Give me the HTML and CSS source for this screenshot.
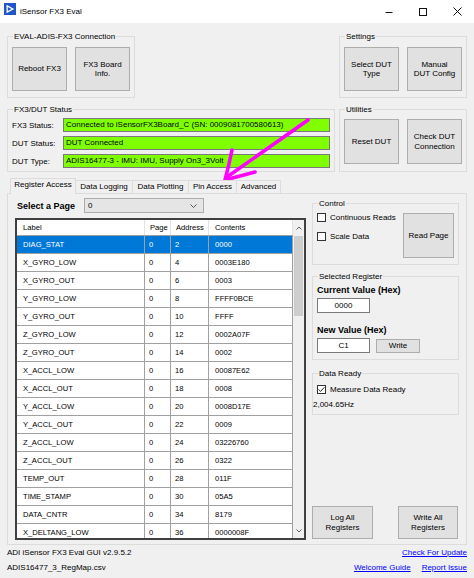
FILE: index.html
```html
<!DOCTYPE html>
<html lang="en">
<head>
<meta charset="utf-8">
<title>iSensor FX3 Eval</title>
<link rel="stylesheet" href="styles.css">
</head>
<body>
<div class="window">
  <div class="titlebar">
    <svg class="app-icon" viewBox="0 0 12 12" aria-hidden="true">
      <rect x="0" y="0" width="12" height="12" fill="#1f56c9"/>
      <polygon points="2.5,1.8 10.2,6 2.5,10.2" fill="#ffffff"/>
      <polygon points="3.8,3.9 7.6,6 3.8,8.1" fill="#1f56c9"/>
    </svg>
    <span class="title">iSensor FX3 Eval</span>
    <div class="win-controls">
      <span class="wc"><svg width="8" height="8" viewBox="0 0 8 8"><line x1="0.5" y1="4.5" x2="7.5" y2="4.5" stroke="#111" stroke-width="1"/></svg></span>
      <span class="wc"><svg width="8" height="8" viewBox="0 0 8 8"><rect x="0.5" y="0.5" width="7" height="7" fill="none" stroke="#111" stroke-width="1"/></svg></span>
      <span class="wc"><svg width="9" height="9" viewBox="0 0 9 9"><path d="M0.5 0.5 L8.5 8.5 M8.5 0.5 L0.5 8.5" stroke="#111" stroke-width="1"/></svg></span>
    </div>
  </div>

  <div class="content">
    <div class="row row-top">
      <div class="group g-small">
        <div class="group-title">EVAL-ADIS-FX3 Connection</div>
        <div class="btn-row">
          <button class="btn btn-big">Reboot FX3</button>
          <button class="btn btn-big">FX3 Board<br>Info.</button>
        </div>
      </div>
      <div class="group g-small">
        <div class="group-title">Settings</div>
        <div class="btn-row">
          <button class="btn btn-big">Select DUT<br>Type</button>
          <button class="btn btn-big">Manual<br>DUT Config</button>
        </div>
      </div>
    </div>

    <div class="row row-status">
      <div class="group g-status">
        <div class="group-title">FX3/DUT Status</div>
        <div class="status-rows">
          <div class="status-row"><span class="status-label">FX3 Status:</span><div class="status-box">Connected to iSensorFX3Board_C (SN: 0009081700580613)</div></div>
          <div class="status-row"><span class="status-label">DUT Status:</span><div class="status-box">DUT Connected</div></div>
          <div class="status-row"><span class="status-label">DUT Type:</span><div class="status-box">ADIS16477-3 - IMU: IMU, Supply On3_3Volt</div></div>
        </div>
      </div>
      <div class="group g-small g-util">
        <div class="group-title">Utilities</div>
        <div class="btn-row btn-row-util">
          <button class="btn btn-util">Reset DUT</button>
          <button class="btn btn-util">Check DUT<br>Connection</button>
        </div>
      </div>
    </div>

    <div class="tabs">
      <div class="tab tab-selected">Register Access</div>
      <div class="tab tab-w57">Data Logging</div>
      <div class="tab tab-w56">Data Plotting</div>
      <div class="tab tab-w48">Pin Access</div>
      <div class="tab tab-w44">Advanced</div>
    </div>

    <div class="tab-panel">
      <div class="reg-left">
        <div class="page-select">
          <span class="page-label">Select a Page</span>
          <div class="combo">
            <span class="combo-value">0</span>
            <svg class="combo-arrow" width="7" height="4" viewBox="0 0 7 4"><polyline points="0.5,0.5 3.5,3.5 6.5,0.5" fill="none" stroke="#555" stroke-width="1"/></svg>
          </div>
        </div>
        <div class="grid">
          <div class="grid-main">
            <div class="grid-row grid-head">
              <div class="cell c-label">Label</div>
              <div class="cell c-page">Page</div>
              <div class="cell c-addr">Address</div>
              <div class="cell c-cont">Contents</div>
            </div>
            <div class="grid-row selected"><div class="cell c-label">DIAG_STAT</div><div class="cell c-page">0</div><div class="cell c-addr">2</div><div class="cell c-cont">0000</div></div>
            <div class="grid-row"><div class="cell c-label">X_GYRO_LOW</div><div class="cell c-page">0</div><div class="cell c-addr">4</div><div class="cell c-cont">0003E180</div></div>
            <div class="grid-row"><div class="cell c-label">X_GYRO_OUT</div><div class="cell c-page">0</div><div class="cell c-addr">6</div><div class="cell c-cont">0003</div></div>
            <div class="grid-row"><div class="cell c-label">Y_GYRO_LOW</div><div class="cell c-page">0</div><div class="cell c-addr">8</div><div class="cell c-cont">FFFF0BCE</div></div>
            <div class="grid-row"><div class="cell c-label">Y_GYRO_OUT</div><div class="cell c-page">0</div><div class="cell c-addr">10</div><div class="cell c-cont">FFFF</div></div>
            <div class="grid-row"><div class="cell c-label">Z_GYRO_LOW</div><div class="cell c-page">0</div><div class="cell c-addr">12</div><div class="cell c-cont">0002A07F</div></div>
            <div class="grid-row"><div class="cell c-label">Z_GYRO_OUT</div><div class="cell c-page">0</div><div class="cell c-addr">14</div><div class="cell c-cont">0002</div></div>
            <div class="grid-row"><div class="cell c-label">X_ACCL_LOW</div><div class="cell c-page">0</div><div class="cell c-addr">16</div><div class="cell c-cont">00087E62</div></div>
            <div class="grid-row"><div class="cell c-label">X_ACCL_OUT</div><div class="cell c-page">0</div><div class="cell c-addr">18</div><div class="cell c-cont">0008</div></div>
            <div class="grid-row"><div class="cell c-label">Y_ACCL_LOW</div><div class="cell c-page">0</div><div class="cell c-addr">20</div><div class="cell c-cont">0008D17E</div></div>
            <div class="grid-row"><div class="cell c-label">Y_ACCL_OUT</div><div class="cell c-page">0</div><div class="cell c-addr">22</div><div class="cell c-cont">0009</div></div>
            <div class="grid-row"><div class="cell c-label">Z_ACCL_LOW</div><div class="cell c-page">0</div><div class="cell c-addr">24</div><div class="cell c-cont">03226760</div></div>
            <div class="grid-row"><div class="cell c-label">Z_ACCL_OUT</div><div class="cell c-page">0</div><div class="cell c-addr">26</div><div class="cell c-cont">0322</div></div>
            <div class="grid-row"><div class="cell c-label">TEMP_OUT</div><div class="cell c-page">0</div><div class="cell c-addr">28</div><div class="cell c-cont">011F</div></div>
            <div class="grid-row"><div class="cell c-label">TIME_STAMP</div><div class="cell c-page">0</div><div class="cell c-addr">30</div><div class="cell c-cont">05A5</div></div>
            <div class="grid-row"><div class="cell c-label">DATA_CNTR</div><div class="cell c-page">0</div><div class="cell c-addr">34</div><div class="cell c-cont">8179</div></div>
            <div class="grid-row"><div class="cell c-label">X_DELTANG_LOW</div><div class="cell c-page">0</div><div class="cell c-addr">36</div><div class="cell c-cont">0000008F</div></div>
          </div>
          <div class="vscroll">
            <div class="sb-arrow sb-up"><svg width="6" height="4" viewBox="0 0 6 4"><polyline points="0.5,3.5 3,1 5.5,3.5" fill="none" stroke="#606060" stroke-width="1"/></svg></div>
            <div class="sb-track"><div class="sb-thumb"></div></div>
            <div class="sb-arrow sb-down"><svg width="6" height="4" viewBox="0 0 6 4"><polyline points="0.5,0.5 3,3 5.5,0.5" fill="none" stroke="#606060" stroke-width="1"/></svg></div>
          </div>
        </div>
      </div>

      <div class="reg-right">
        <div class="group g-control">
          <div class="group-title">Control</div>
          <div class="control-body">
            <div class="checks">
              <label class="check"><span class="checkbox"></span>Continuous Reads</label>
              <label class="check check-2"><span class="checkbox"></span>Scale Data</label>
            </div>
            <button class="btn btn-read">Read Page</button>
          </div>
        </div>

        <div class="group g-selreg">
          <div class="group-title">Selected Register</div>
          <div class="bold-label">Current Value (Hex)</div>
          <div class="textbox">0000</div>
          <div class="bold-label bold-label-2">New Value (Hex)</div>
          <div class="write-row">
            <div class="textbox">C1</div>
            <button class="btn btn-write">Write</button>
          </div>
        </div>

        <div class="group g-dr">
          <div class="group-title">Data Ready</div>
          <label class="check check-dr"><span class="checkbox"><svg width="7" height="7" viewBox="0 0 7 7"><polyline points="0.6,3.4 2.6,5.5 6.4,1.2" fill="none" stroke="#333" stroke-width="1"/></svg></span>Measure Data Ready</label>
          <div class="dr-value">2,004.65Hz</div>
        </div>

        <div class="bottom-btns">
          <button class="btn btn-log">Log All<br>Registers</button>
          <button class="btn btn-writeall">Write All<br>Registers</button>
        </div>
      </div>
    </div>

    <div class="statusbar">
      <div class="status-left">
        <div>ADI iSensor FX3 Eval GUI v2.9.5.2</div>
        <div class="sl-2">ADIS16477_3_RegMap.csv</div>
      </div>
      <div class="status-right">
        <div><a class="link" href="#">Check For Update</a></div>
        <div class="sl-2"><a class="link" href="#">Welcome Guide</a><a class="link link-gap" href="#">Report Issue</a></div>
      </div>
    </div>
  </div>

  <svg class="annotation" width="474" height="578" viewBox="0 0 474 578" aria-hidden="true">
    <path d="M308 120 Q 268 148 227 177" fill="none" stroke="#ff00ff" stroke-width="3.6" stroke-linecap="round"/>
    <path d="M232 150 Q 229 165 225 180 L 255 172" fill="none" stroke="#ff00ff" stroke-width="3.6" stroke-linecap="round" stroke-linejoin="round"/>
  </svg>
</div>
</body>
</html>
```

FILE: styles.css
```css
* { box-sizing: border-box; }

html, body { margin: 0; padding: 0; }

body {
  width: 474px;
  height: 578px;
  overflow: hidden;
  background: #f0f0f0;
  font-family: "Liberation Sans", Arial, sans-serif;
  font-size: 8px;
  color: #000;
}

.window {
  position: relative;
  width: 474px;
  height: 578px;
}

/* title bar */
.titlebar {
  height: 23px;
  background: #fff;
  display: flex;
  align-items: center;
}
.app-icon {
  width: 12px;
  height: 12px;
  margin-left: 4px;
  align-self: flex-start;
  margin-top: 3px;
}
.title {
  margin-left: 4px;
  font-size: 8px;
  color: #000;
}
.win-controls {
  margin-left: auto;
  display: flex;
  height: 100%;
}
.wc {
  width: 34px;
  display: flex;
  align-items: center;
  justify-content: center;
}

/* layout */
.content { padding: 0 7px; }
.row { display: flex; justify-content: space-between; }
.row-top { margin-top: 13px; }
.row-status { margin-top: 11px; }

.group {
  border: 1px solid #dcdcdc;
  padding: 0 4px 6px;
}
.group-title {
  line-height: 10px;
  margin: -5px 0 0 1px;
  padding: 0 1px;
  background: #f0f0f0;
  width: fit-content;
  white-space: nowrap;
}
.g-small { width: 128px; }

.btn-row { display: flex; gap: 8px; margin-top: 5px; }
.btn-row-util { margin-top: 4px; }

.btn {
  font: inherit;
  color: #000;
  background: #e1e1e1;
  border: 1px solid #adadad;
  padding: 0;
  margin: 0;
  line-height: 9.5px;
  text-align: center;
}
.btn-big { width: 55px; height: 44px; }
.btn-util { width: 55px; height: 45px; }

/* status */
.g-status { width: 328px; padding: 0 4px 3px; }
.status-rows {
  margin-top: 3px;
  display: flex;
  flex-direction: column;
  gap: 4px;
}
.status-row { display: flex; align-items: center; height: 14px; }
.status-label { width: 51px; white-space: nowrap; }
.status-box {
  flex: 1;
  height: 14px;
  background: #80ff00;
  border: 1px solid #7a7a7a;
  line-height: 12px;
  padding-left: 2px;
  white-space: nowrap;
  overflow: hidden;
}

/* tabs */
.tabs {
  display: flex;
  align-items: flex-end;
  height: 16px;
  margin: 6px 0 -1px 3px;
  position: relative;
  z-index: 1;
}
.tab {
  height: 13px;
  margin-bottom: 1px;
  border-top: 1px solid #dcdcdc;
  border-right: 1px solid #dcdcdc;
  line-height: 12px;
  text-align: center;
  white-space: nowrap;
  background: #f0f0f0;
}
.tab-selected {
  width: 66px;
  height: 16px;
  margin-bottom: 0;
  border-left: 1px solid #dcdcdc;
  line-height: 12px;
  background: #f0f0f0;
}
.tab-w57 { width: 57px; }
.tab-w56 { width: 56px; }
.tab-w48 { width: 48px; }
.tab-w44 { width: 44px; }

.tab-panel {
  height: 352px;
  border: 1px solid #dcdcdc;
  background: #f0f0f0;
  display: flex;
}

/* left side: page select + grid */
.reg-left {
  width: 298px;
  padding: 4px 0 0 7px;
  display: flex;
  flex-direction: column;
}
.page-select {
  display: flex;
  align-items: center;
  height: 15px;
  padding-left: 2px;
}
.page-label {
  width: 67px;
  font-weight: bold;
  font-size: 9px;
  white-space: nowrap;
}
.combo {
  width: 120px;
  height: 15px;
  border: 1px solid #adadad;
  background: #e5e5e5;
  display: flex;
  align-items: center;
  padding: 0 6px 0 3px;
}
.combo-value { flex: 1; }
.combo-arrow { display: block; margin-top: 1px; }

.grid {
  margin-top: 5px;
  width: 291px;
  height: 322px;
  border: 2px solid #404040;
  background: #fff;
  display: flex;
  overflow: hidden;
}
.grid-main {
  width: 276px;
  overflow: hidden;
  font-size: 7.6px;
}
.grid-row {
  display: grid;
  grid-template-columns: 128px 26px 38px 84px;
  height: 18px;
  border-bottom: 1px solid #a0a0a0;
}
.cell {
  border-right: 1px solid #a0a0a0;
  padding-left: 6px;
  line-height: 17px;
  white-space: nowrap;
  overflow: hidden;
}
.c-page, .c-addr { padding-left: 4px; }
.grid-head {
  height: 16px;
  background: #fff;
}
.grid-head .cell {
  line-height: 15px;
  border-right-color: #e3e3e3;
}
.grid-head .c-page { padding-left: 5px; }
.grid-head .c-addr { padding-left: 5px; }
.selected { background: #0078d7; color: #fff; }

.vscroll {
  width: 11px;
  display: flex;
  flex-direction: column;
  background: #f0f0f0;
}
.sb-arrow {
  display: flex;
  align-items: center;
  justify-content: center;
}
.sb-up { height: 16px; }
.sb-down { height: 14px; }
.sb-track { flex: 1; }
.sb-thumb {
  height: 80px;
  margin: 0 1px;
  background: #cdcdcd;
}

/* right side */
.reg-right {
  width: 147px;
  margin-left: 6px;
  padding: 9px 0 5px;
  display: flex;
  flex-direction: column;
}
.control-body {
  margin-top: 4px;
  display: flex;
  justify-content: space-between;
}
.checks { display: flex; flex-direction: column; }
.check {
  display: flex;
  align-items: center;
  height: 9px;
  line-height: 9px;
  white-space: nowrap;
}
.check-2 { margin-top: 10px; }
.checkbox {
  width: 9px;
  height: 9px;
  border: 1px solid #333;
  background: #fff;
  margin-right: 4px;
  display: flex;
  align-items: center;
  justify-content: center;
  flex: none;
}
.checkbox svg { display: block; }
.btn-read { width: 51px; height: 45px; }

.g-selreg { margin-top: 11px; }
.bold-label {
  margin-top: 2px;
  font-weight: bold;
  font-size: 9px;
  line-height: 12px;
  white-space: nowrap;
}
.bold-label-2 { margin-top: 11px; }
.textbox {
  margin-top: 2px;
  width: 53px;
  height: 15px;
  border: 1px solid #7a7a7a;
  background: #fff;
  text-align: center;
  line-height: 13px;
}
.write-row {
  margin-top: 2px;
  display: flex;
  align-items: flex-end;
  gap: 6px;
}
.write-row .textbox { margin-top: 0; }
.btn-write { width: 44px; height: 14px; line-height: 12px; }

.g-dr { margin-top: 13px; padding-bottom: 4px; }
.check-dr { margin-top: 6px; }
.dr-value {
  margin: 6px 0 0 -4px;
  line-height: 10px;
}

.bottom-btns {
  margin-top: auto;
  display: flex;
  justify-content: space-between;
  padding-right: 1px;
}
.btn-log { width: 61px; height: 33px; }
.btn-writeall { width: 60px; height: 33px; }

/* status bar */
.statusbar {
  margin-top: 3px;
  display: flex;
  justify-content: space-between;
  line-height: 10px;
}
.sl-2 { margin-top: 5px; }
.status-right { text-align: right; }
.link { color: #0000ff; text-decoration: underline; }
.link-gap { margin-left: 11px; }

/* hand-drawn annotation over the window */
.annotation {
  position: absolute;
  left: 0;
  top: 0;
  pointer-events: none;
}
```
